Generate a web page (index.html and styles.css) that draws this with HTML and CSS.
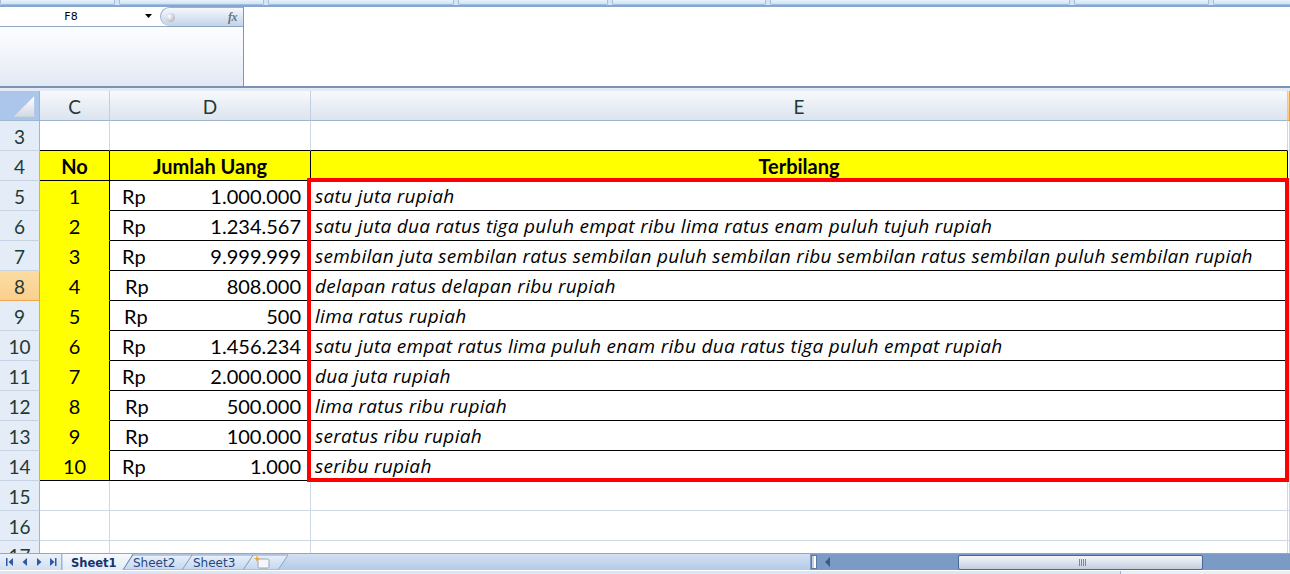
FILE: index.html
```html
<!DOCTYPE html>
<html lang="id">
<head>
<meta charset="utf-8">
<title>Terbilang</title>
<link rel="stylesheet" href="styles.css">
</head>
<body>
<div class="app">
  <div class="topstrip">
    <span class="tb w1"></span><span class="tb w2"></span><span class="tb w3"></span><span class="tb w4"></span><span class="tb w5"></span><span class="tb w6"></span><span class="tb w7"></span><span class="tb w8"></span>
  </div>
  <div class="fbar">
    <div class="fleft">
      <div class="nbrow">
        <div class="namebox"><span class="nbtext">F8</span><svg class="dd" width="8" height="5" viewBox="0 0 8 5"><path d="M0 0H7L3.5 4Z" fill="#000"/></svg></div>
        <div class="fxbtn"><span class="dot"></span><span class="fx">fx</span></div>
      </div>
      <div class="fgrad"></div>
    </div>
    <div class="fright"></div>
  </div>
  <div class="sep"></div>
  <div class="sheet">
    <div class="grid">
      <div class="c corner"><svg width="38" height="28" viewBox="0 0 38 28"><defs><linearGradient id="cg" x1="0" y1="0" x2="0" y2="1"><stop offset="0" stop-color="#ffffff"/><stop offset="1" stop-color="#d3d9e2"/></linearGradient></defs><path d="M13 25L34 4V25Z" fill="url(#cg)"/></svg></div>
      <div class="c ch">C</div>
      <div class="c ch">D</div>
      <div class="c ch">E</div>
      <div class="c ch fsel"></div>

      <div class="c rh">3</div>
      <div class="c bb"></div><div class="c bb"></div><div class="c bb"></div><div class="c"></div>

      <div class="c rh">4</div>
      <div class="c y bb br hd">No</div><div class="c y bb br hd">Jumlah Uang</div><div class="c y bb br hd">Terbilang</div><div class="c"></div>

      <div class="c rh">5</div>
      <div class="c y yb br no">1</div><div class="c bb br amt"><span>Rp</span><span>1.000.000</span></div><div class="c bb br tx">satu juta rupiah</div><div class="c"></div>

      <div class="c rh">6</div>
      <div class="c y yb br no">2</div><div class="c bb br amt"><span>Rp</span><span>1.234.567</span></div><div class="c bb br tx">satu juta dua ratus tiga puluh empat ribu lima ratus enam puluh tujuh rupiah</div><div class="c"></div>

      <div class="c rh">7</div>
      <div class="c y yb br no">3</div><div class="c bb br amt"><span>Rp</span><span>9.999.999</span></div><div class="c bb br tx">sembilan juta sembilan ratus sembilan puluh sembilan ribu sembilan ratus sembilan puluh sembilan rupiah</div><div class="c"></div>

      <div class="c rh sel">8</div>
      <div class="c y yb br no">4</div><div class="c bb br amt sh"><span>Rp</span><span>808.000</span></div><div class="c bb br tx">delapan ratus delapan ribu rupiah</div><div class="c"></div>

      <div class="c rh">9</div>
      <div class="c y yb br no">5</div><div class="c bb br amt sh1"><span>Rp</span><span>500</span></div><div class="c bb br tx">lima ratus rupiah</div><div class="c"></div>

      <div class="c rh">10</div>
      <div class="c y yb br no">6</div><div class="c bb br amt"><span>Rp</span><span>1.456.234</span></div><div class="c bb br tx">satu juta empat ratus lima puluh enam ribu dua ratus tiga puluh empat rupiah</div><div class="c"></div>

      <div class="c rh">11</div>
      <div class="c y yb br no">7</div><div class="c bb br amt"><span>Rp</span><span>2.000.000</span></div><div class="c bb br tx">dua juta rupiah</div><div class="c"></div>

      <div class="c rh">12</div>
      <div class="c y yb br no">8</div><div class="c bb br amt sh"><span>Rp</span><span>500.000</span></div><div class="c bb br tx">lima ratus ribu rupiah</div><div class="c"></div>

      <div class="c rh">13</div>
      <div class="c y yb br no">9</div><div class="c bb br amt sh"><span>Rp</span><span>100.000</span></div><div class="c bb br tx">seratus ribu rupiah</div><div class="c"></div>

      <div class="c rh">14</div>
      <div class="c y bb br no">10</div><div class="c bb br amt"><span>Rp</span><span>1.000</span></div><div class="c bb br tx">seribu rupiah</div><div class="c"></div>

      <div class="c rh">15</div>
      <div class="c"></div><div class="c"></div><div class="c"></div><div class="c"></div>

      <div class="c rh">16</div>
      <div class="c"></div><div class="c"></div><div class="c"></div><div class="c"></div>

      <div class="c rh last">17</div>
      <div class="c"></div><div class="c"></div><div class="c"></div><div class="c"></div>
    </div>
    <div class="redbox"></div>
  </div>
  <div class="tabbar">
    <div class="nav">
      <svg width="62" height="16" viewBox="0 0 62 16">
        <g fill="#2e5aa5">
          <rect x="6" y="4" width="1.5" height="8"/><path d="M13 4V12L8.5 8Z"/>
          <path d="M27 4V12L22.5 8Z"/>
          <path d="M37 4V12L41.5 8Z"/>
          <path d="M50 4V12L54.5 8Z"/><rect x="55" y="4" width="1.5" height="8"/>
        </g>
      </svg>
    </div>
    <svg class="tabs" width="232" height="16" viewBox="62 0 232 16">
      <defs>
        <linearGradient id="tg" x1="0" y1="0" x2="0" y2="1"><stop offset="0" stop-color="#e8f0fa"/><stop offset="1" stop-color="#c4d6ee"/></linearGradient>
        <linearGradient id="ag" x1="0" y1="0" x2="0" y2="1"><stop offset="0" stop-color="#f6f9fd"/><stop offset="1" stop-color="#e2ebf7"/></linearGradient>
      </defs>
      <path d="M243 16L253 1H288L278 16Z" fill="url(#tg)" stroke="#8aa6cc" stroke-width="1"/>
      <path d="M182 16L192 1H253L243 16Z" fill="url(#tg)" stroke="#8aa6cc" stroke-width="1"/>
      <path d="M123 16L133 1H192L182 16Z" fill="url(#tg)" stroke="#8aa6cc" stroke-width="1"/>
      <path d="M63 0H133L123 16H63Z" fill="url(#ag)"/>
      <path d="M123 16L133 0" stroke="#6d8dbb" stroke-width="1"/>
      <text x="71" y="13" class="tabt act">Sheet1</text>
      <text x="133" y="13" class="tabt">Sheet2</text>
      <text x="193" y="13" class="tabt">Sheet3</text>
      <g>
        <rect x="258" y="5" width="11" height="9" rx="1.5" fill="#f4f6f9" stroke="#8c96a5" stroke-width="0.8"/>
        <path d="M257 1.5L258 4L260.5 4.5L258 5.5L257 8L256 5.5L253.5 4.5L256 4Z" fill="#f5a623"/>
      </g>
    </svg>
    <div class="tabfill"></div>
    <div class="hs">
      <span class="split"></span>
      <svg class="larr" width="6" height="10" viewBox="0 0 6 10"><path d="M5 0V10L0 5Z" fill="#3c5a86"/></svg>
      <span class="thumb"><span class="grip"></span></span>
    </div>
  </div>
  <div class="status"><span class="stfill"></span><span class="stbox"></span></div>
</div>
</body>
</html>
```
FILE: styles.css
```css
* { box-sizing: border-box; margin: 0; padding: 0; }
html, body { width: 1290px; height: 574px; overflow: hidden; background: #fff; }
body { font-family: Lato, "Open Sans", sans-serif; }

.app { width: 1290px; height: 574px; display: flex; flex-direction: column; overflow: hidden; }

/* top ribbon remnant */
.topstrip { height: 7px; flex: none; display: flex; gap: 4px; background: #d3e5f6; border-bottom: 2px solid #89a6cd; overflow: hidden; }
.tb { height: 5px; flex: none; background: linear-gradient(#e9f3fc, #cfe2f5); border: 1px solid #9fc0e2; border-top: none; border-radius: 0 0 2px 2px; }
.w1 { width: 115px; } .w2 { width: 145px; } .w3 { width: 186px; } .w4 { width: 150px; }
.w5 { width: 154px; } .w6 { width: 300px; } .w7 { width: 135px; } .w8 { width: 80px; }

/* formula bar */
.fbar { height: 81px; flex: none; display: flex; border-bottom: 2px solid #7b93b3; }
.fleft { width: 244px; flex: none; display: flex; flex-direction: column; border-right: 1px solid #7f97b7; }
.nbrow { height: 20px; flex: none; display: flex; border-bottom: 1px solid #8fa5c2; }
.namebox { width: 160px; flex: none; display: flex; align-items: center; background: #fff; }
.nbtext { width: 142px; text-align: center; font-family: "DejaVu Sans", sans-serif; font-size: 11px; color: #000; }
.dd { margin-left: 3px; }
.fxbtn { flex: 1; display: flex; align-items: center; justify-content: space-between; padding: 0 6px 0 5px; background: linear-gradient(#f6f9fd, #d9e4f2 55%, #c3d3e9); border: 1px solid #9cb1cf; border-right: none; border-bottom: none; border-radius: 10px 0 0 10px; }
.dot { width: 9px; height: 9px; border-radius: 50%; background: radial-gradient(circle at 35% 35%, #ffffff, #b9bec6 70%, #9aa1ab); }
.fx { font-family: "Liberation Serif", serif; font-style: italic; font-weight: bold; font-size: 12px; color: #6b7380; letter-spacing: -0.5px; }
.fgrad { flex: 1; background: linear-gradient(#fcfdfe, #f3f6fb 40%, #e2e9f4); }
.fright { flex: 1; background: #fff; }
.sep { height: 3px; flex: none; background: #e3eaf3; }

/* sheet */
.sheet { height: 462px; flex: none; position: relative; overflow: hidden; }
.grid { display: grid; grid-template-columns: 40px 70px 201px 977px 2px; grid-template-rows: 30px; grid-auto-rows: 30px; }
.c { display: flex; align-items: center; border-right: 1px solid #d0d7e5; border-bottom: 1px solid #d0d7e5; font-size: 20px; color: #000; white-space: nowrap; overflow: visible; }

.corner { background: #abc6ea; border-right: 1px solid #9db4d2; border-bottom: 1px solid #9eb6ce; padding: 1px; }
.ch { justify-content: center; background: linear-gradient(#f8fafc, #e9eef5 50%, #dde4ee); border-right: 1px solid #c1cedd; border-bottom: 1px solid #9eb6ce; color: #1f3a36; font-size: 19px; padding-top: 1px; }
.ch.fsel { background: linear-gradient(#fbe2b4, #f6c572); border-color: #f29c3c; }
.rh { justify-content: center; background: #e4ecf7; border-right: 1px solid #9eb6ce; border-bottom: 1px solid #c5d3e3; color: #1f3a36; font-size: 19px; padding-top: 1px; }
.rh.sel { background: linear-gradient(#fcdca3, #f9d08e); border-right-color: #f29c3c; border-bottom-color: #f2a64e; }
.rh.last { align-items: flex-start; padding-top: 3px; }

.y { background: #ffff00; }
.bb { border-bottom-color: #000; }
.br { border-right-color: #000; }
.yb { border-bottom-color: #ffff00; }
.hd { justify-content: center; font-weight: 700; }
.no { justify-content: center; }
.amt { justify-content: space-between; padding: 0 9px 0 12px; }
.amt.sh { padding-left: 15px; }
.amt.sh1 { padding-left: 14px; }
.tx { font-family: "Open Sans", sans-serif; font-style: italic; padding-left: 4px; font-size: 19px; letter-spacing: 0.3px; }

.redbox { position: absolute; left: 307px; top: 87px; width: 982px; height: 304px; border: 4px solid #ff0000; pointer-events: none; }

/* sheet tabs + scrollbar */
.tabbar { height: 17px; flex: none; display: flex; border-top: 1px solid #8ba8d0; background: linear-gradient(#d2e0f2, #b4cae8); }
.nav { width: 62px; flex: none; background: linear-gradient(#eaf1f9, #d2dfef); border-right: 1px solid #9ab3d5; }
.nav svg, .tabs { display: block; }
.tabs { flex: none; }
.tabt { font-family: "DejaVu Sans", sans-serif; font-size: 12px; fill: #25467f; }
.tabt.act { font-weight: bold; fill: #14336e; font-size: 11.5px; }
.tabfill { flex: 1; }
.hs { width: 480px; flex: none; display: flex; align-items: center; background: #7b9ac6; }
.split { width: 6px; height: 14px; margin-left: 1px; background: #fff; border: 1px solid #5b79a6; box-shadow: inset 2px 0 0 #c5d1e3; }
.larr { margin-left: 8px; }
.thumb { width: 245px; height: 15px; margin-left: 127px; display: flex; align-items: center; justify-content: center; background: linear-gradient(#f3f5f9, #dde3ec 50%, #c3cddc); border: 1px solid #4b6894; border-radius: 2px; }
.grip { width: 7px; height: 7px; background: repeating-linear-gradient(90deg, #7b8699 0 1px, transparent 1px 2px); margin-left: 4px; }

.status { height: 4px; flex: none; display: flex; background: #dbe6f4; border-top: 1px solid #fff; }
.stfill { flex: 1; }
.stbox { width: 170px; border-left: 1px solid #9bb2d2; background: #e8eff8; }
```
